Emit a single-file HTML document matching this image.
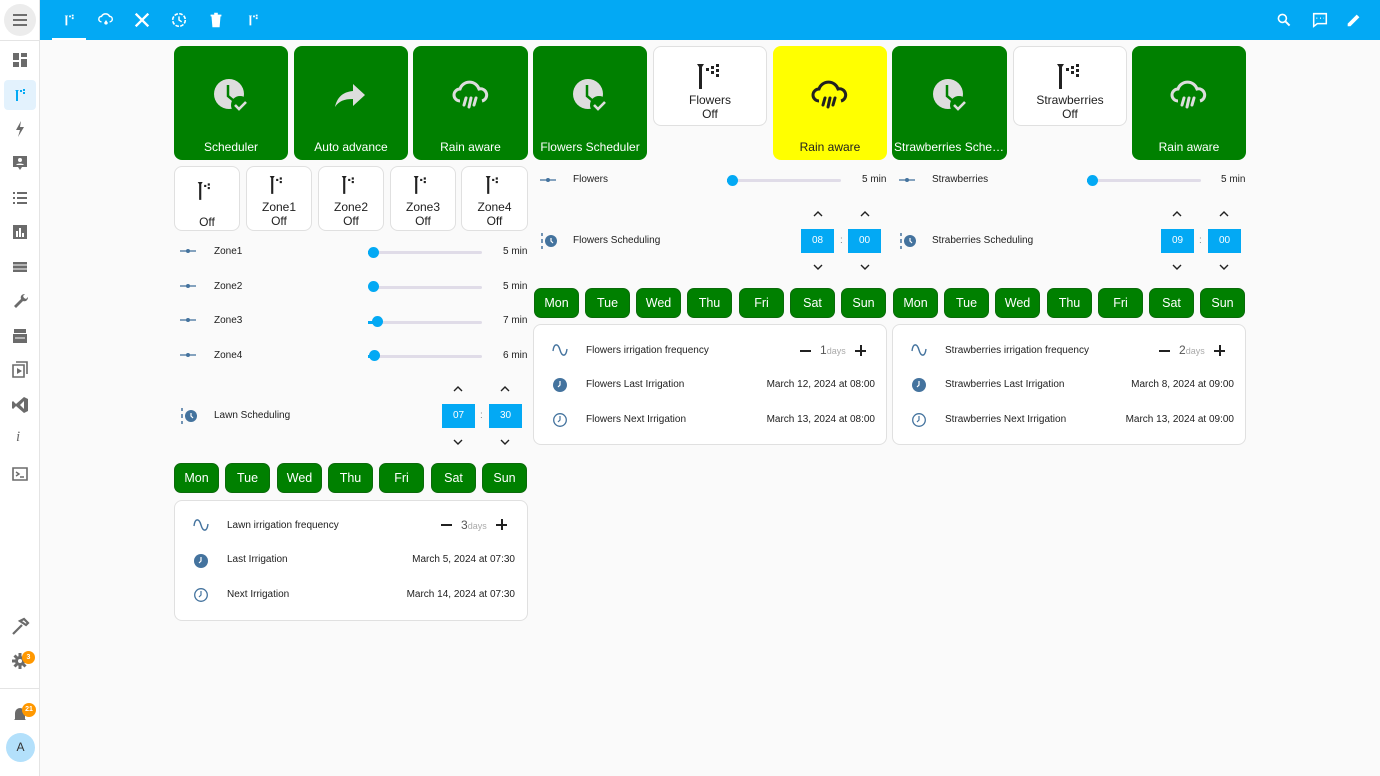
<!DOCTYPE html>
<html><head><meta charset="utf-8"><style>
*{box-sizing:border-box;margin:0;padding:0}
body{width:1380px;height:776px;background:#fafafa;font-family:"Liberation Sans",sans-serif;position:relative;overflow:hidden;color:#212121}
.a{position:absolute}
#side{left:0;top:0;width:40px;height:776px;background:#fff;border-right:1px solid #e4e4e4}
#top{left:40px;top:0;width:1340px;height:40px;background:#03a9f4}
.si{position:absolute;left:10px;width:20px;height:20px}
.tile{position:absolute;border-radius:8px;background:#008000;color:#fff;font-size:12px;text-align:center}
.tile .l{position:absolute;left:0;right:0;bottom:6px;white-space:nowrap;overflow:hidden;text-overflow:ellipsis;padding:0 2px}
.tile svg{position:absolute;left:50%;top:30px;margin-left:-20px;width:40px;height:40px}
.wt{position:absolute;border-radius:8px;background:#fff;border:1px solid #e0e0e0;font-size:12px;text-align:center;line-height:14px;color:#212121}
.wt svg{display:block;margin:0 auto}
.trk{position:absolute;height:3px;background:#e0dce8;border-radius:2px}
.knob{position:absolute;width:11px;height:11px;border-radius:50%;background:#03a9f4}
.kl{position:absolute;height:3px;background:#03a9f4}
.tb{position:absolute;width:33px;height:24px;background:#03a9f4;color:#fff;font-size:10px;text-align:center;line-height:24px}
.day{position:absolute;width:45px;height:30px;background:#008000;border-radius:7px;border:1px solid #0a6a0a;color:#fff;font-size:12.5px;text-align:center;line-height:28px}
.card{position:absolute;background:#fff;border:1px solid #e0e0e0;border-radius:8px}
.ct{position:absolute;font-size:10px;color:#212121;white-space:nowrap}
.badge{position:absolute;background:#ff9800;color:#fff;border-radius:50%;font-size:7px;text-align:center;font-weight:bold}
</style></head><body>
<div id="side" class="a">
 <div class="a" style="left:4px;top:4px;width:32px;height:32px;border-radius:50%;background:#ececec"></div>
 <svg class="a" style="left:12px;top:14px" width="16" height="12"><path d="M1 1h14M1 6h14M1 11h14" stroke="#444" stroke-width="1.6"/></svg>
 <div class="a" style="left:0;top:40px;width:40px;border-top:1px solid #e4e4e4"></div>
 <svg class="si" style="top:50px" viewBox="0 0 20 20"><path d="M3 3h6v7H3zM11 3h6v4h-6zM11 9h6v8h-6zM3 12h6v5H3z" fill="#6b6b6b"/></svg>
 <div class="a" style="left:4px;top:80px;width:32px;height:30px;border-radius:4px;background:#e3f2fd"></div>
 <svg class="si" style="top:85px" viewBox="0 0 20 20"><path d="M5 5h4l-1 1v10H6V6z" fill="#03a9f4"/><path d="M10 5h2v2h-2zM13 4h2v2h-2zM13 7h2v2h-2z" fill="#03a9f4"/></svg>
 <svg class="si" style="top:119px" viewBox="0 0 20 20"><path d="M11 2L6 11h4l-2 7 6-10h-4z" fill="#6b6b6b"/></svg>
 <svg class="si" style="top:153px" viewBox="0 0 20 20"><path d="M3 3h14v11h-5l-2 3-2-3H3z" fill="#6b6b6b"/><circle cx="10" cy="7" r="2" fill="#fff"/><path d="M6 12c1-2 7-2 8 0z" fill="#fff"/></svg>
 <svg class="si" style="top:188px" viewBox="0 0 20 20"><path d="M3 4h2v2H3zM7 4h10v2H7zM3 9h2v2H3zM7 9h10v2H7zM3 14h2v2H3zM7 14h10v2H7z" fill="#6b6b6b"/></svg>
 <svg class="si" style="top:222px" viewBox="0 0 20 20"><path d="M3 3h14v14H3z" fill="#6b6b6b"/><path d="M6 9h2v6H6zM9 6h2v9H9zM12 11h2v4h-2z" fill="#fff"/></svg>
 <svg class="si" style="top:257px" viewBox="0 0 20 20"><path d="M3 5h14v10H3z" fill="#6b6b6b"/><path d="M3 8h14M3 12h14" stroke="#fff"/></svg>
 <svg class="si" style="top:291px" viewBox="0 0 20 20"><path d="M4 15l7-7c-1-3 1-5 4-5l-2 2 1 2 2 1 2-2c0 3-2 5-5 4l-7 7z" fill="#6b6b6b"/></svg>
 <svg class="si" style="top:326px" viewBox="0 0 20 20"><path d="M4 3h12v4H4zM3 8h14v9H3z" fill="#6b6b6b"/><path d="M5 12h10" stroke="#fff"/></svg>
 <svg class="si" style="top:360px" viewBox="0 0 20 20"><path d="M3 5h11v12H3z" fill="none" stroke="#6b6b6b" stroke-width="1.6"/><path d="M6 2h11v12" fill="none" stroke="#6b6b6b" stroke-width="1.6"/><path d="M7 8l5 3-5 3z" fill="#6b6b6b"/></svg>
 <svg class="si" style="top:395px" viewBox="0 0 20 20"><path d="M14 2l4 2v12l-4 2-8-7-3 3-1-1v-6l1-1 3 3zM14 6l-4 4 4 4z" fill="#6b6b6b"/></svg>
 <div class="a" style="left:16px;top:429px;font:italic 15px 'Liberation Serif',serif;color:#6b6b6b">i</div>
 <svg class="si" style="top:464px" viewBox="0 0 20 20"><path d="M3 4h14v12H3z" fill="none" stroke="#6b6b6b" stroke-width="1.6"/><path d="M6 8l3 2-3 2M10 13h4" stroke="#6b6b6b" stroke-width="1.4" fill="none"/></svg>
 <svg class="si" style="top:617px" viewBox="0 0 20 20"><path d="M3 17l9-9M10 4l4-2 4 4-2 2z" stroke="#6b6b6b" stroke-width="2.2" fill="none"/></svg>
 <svg class="si" style="top:651px" viewBox="0 0 20 20"><circle cx="10" cy="10" r="5" fill="#6b6b6b"/><path d="M10 2v16M2 10h16M4.5 4.5l11 11M15.5 4.5l-11 11" stroke="#6b6b6b" stroke-width="3"/><circle cx="10" cy="10" r="2" fill="#fff"/></svg>
 <div class="badge" style="left:22px;top:651px;width:13px;height:13px;line-height:13px">3</div>
 <div class="a" style="left:0;top:688px;width:40px;border-top:1px solid #e4e4e4"></div>
 <svg class="si" style="top:704px" viewBox="0 0 20 20"><path d="M5 15V9a5 5 0 0110 0v6l1 1H4z M8 17h4" fill="#6b6b6b"/></svg>
 <div class="badge" style="left:22px;top:703px;width:14px;height:14px;line-height:14px">21</div>
 <div class="a" style="left:6px;top:733px;width:29px;height:29px;border-radius:50%;background:#b3e0fb;text-align:center;line-height:29px;font-size:12px;color:#333">A</div>
</div>
<div id="top" class="a">
 <svg class="a" style="left:21px;top:11px" width="18" height="18" viewBox="0 0 20 20"><path d="M4 5h4l-1 1v10H5V6z" fill="#fff"/><path d="M9 5h2v2H9zM12 4h2v2h-2zM12 7h2v2h-2z" fill="#fff"/></svg>
 <div class="a" style="left:12px;top:38px;width:34px;height:2px;background:#fff"></div>
 <svg class="a" style="left:57px;top:11px" width="18" height="18" viewBox="0 0 20 20"><path d="M5 12a3 3 0 010-6 5 5 0 019 0 3 3 0 010 6" stroke="#fff" stroke-width="1.6" fill="none"/><path d="M10 10l-2 3a2 2 0 004 0z" fill="#fff"/></svg>
 <svg class="a" style="left:93px;top:11px" width="18" height="18" viewBox="0 0 20 20"><path d="M3 3l14 14M17 3L3 17" stroke="#fff" stroke-width="2.6"/></svg>
 <svg class="a" style="left:130px;top:11px" width="18" height="18" viewBox="0 0 20 20"><circle cx="10" cy="10" r="7" stroke="#fff" stroke-width="1.8" fill="none" stroke-dasharray="4 1.5"/><path d="M10 6v4l3 2" stroke="#fff" stroke-width="1.6" fill="none"/></svg>
 <svg class="a" style="left:167px;top:11px" width="18" height="18" viewBox="0 0 20 20"><path d="M4 4h12v2H4zM8 2h4v2H8zM5 6h10l-1 12H6z" fill="#fff"/></svg>
 <svg class="a" style="left:205px;top:11px" width="18" height="18" viewBox="0 0 20 20"><path d="M4 5h4l-1 1v10H5V6z" fill="#fff"/><path d="M9 5h2v2H9zM12 4h2v2h-2zM12 7h2v2h-2z" fill="#fff"/></svg>
 <svg class="a" style="left:1236px;top:12px" width="16" height="16" viewBox="0 0 20 20"><circle cx="8" cy="8" r="5" stroke="#fff" stroke-width="2" fill="none"/><path d="M12 12l5 5" stroke="#fff" stroke-width="2.4"/></svg>
 <svg class="a" style="left:1271px;top:11px" width="18" height="18" viewBox="0 0 20 20"><path d="M3 3h14v11H7l-4 3z" stroke="#fff" stroke-width="1.7" fill="none"/><path d="M6 8h1M10 8h1M14 8h.5" stroke="#fff" stroke-width="1.6"/></svg>
 <svg class="a" style="left:1305px;top:11px" width="18" height="18" viewBox="0 0 20 20"><path d="M3 17v-3l10-10 3 3-10 10z" fill="#fff"/></svg>
</div>

<div class="tile" style="left:174px;top:46px;width:114px;height:114px"><svg viewBox="0 0 40 40"><circle cx="18" cy="18" r="15" fill="#ddd"/><path d="M17 9v11l6 5" stroke="#008000" stroke-width="2.5" fill="none"/><circle cx="29" cy="29" r="9" fill="#008000"/><path d="M24 29l4 4 7-7" stroke="#ddd" stroke-width="2.6" fill="none"/></svg><div class="l">Scheduler</div></div>
<div class="tile" style="left:294px;top:46px;width:114px;height:114px"><svg viewBox="0 0 40 40"><path d="M22 8l12 11-12 11v-7c-9 0-14 2-18 8 2-9 7-15 18-16z" fill="#ddd"/></svg><div class="l">Auto advance</div></div>
<div class="tile" style="left:413px;top:46px;width:115px;height:114px"><svg viewBox="0 0 40 40"><path d="M9 25a6 6 0 010-12 10 10 0 0119 0 6 6 0 013 12" stroke="#ddd" stroke-width="3" fill="none"/><path d="M15 22l-2 7M20 22l-2 9M25 22l-2 7" stroke="#ddd" stroke-width="3" stroke-linecap="round"/></svg><div class="l">Rain aware</div></div>
<div class="tile" style="left:533px;top:46px;width:114px;height:114px"><svg viewBox="0 0 40 40"><circle cx="18" cy="18" r="15" fill="#ddd"/><path d="M17 9v11l6 5" stroke="#008000" stroke-width="2.5" fill="none"/><circle cx="29" cy="29" r="9" fill="#008000"/><path d="M24 29l4 4 7-7" stroke="#ddd" stroke-width="2.6" fill="none"/></svg><div class="l">Flowers Scheduler</div></div>
<div class="wt" style="left:653px;top:46px;width:114px;height:80px;padding-top:16px"><svg width="28" height="30" viewBox="0 0 28 30"><path d="M1 1h7l-2 3v22H3V4z" fill="#212121"/><path d="M10 5h3v3h-3zM15 3h3v3h-3zM15 8h3v3h-3zM20 1h3v3h-3zM20 6h3v3h-3zM20 11h3v3h-3z" fill="#212121"/></svg>Flowers<br>Off</div>
<div class="tile" style="left:773px;top:46px;width:114px;height:114px;background:#ffff00;color:#212121"><svg viewBox="0 0 40 40"><path d="M9 25a6 6 0 010-12 10 10 0 0119 0 6 6 0 013 12" stroke="#212121" stroke-width="3" fill="none"/><path d="M15 22l-2 7M20 22l-2 9M25 22l-2 7" stroke="#212121" stroke-width="3" stroke-linecap="round"/></svg><div class="l">Rain aware</div></div>
<div class="tile" style="left:892px;top:46px;width:115px;height:114px"><svg viewBox="0 0 40 40"><circle cx="18" cy="18" r="15" fill="#ddd"/><path d="M17 9v11l6 5" stroke="#008000" stroke-width="2.5" fill="none"/><circle cx="29" cy="29" r="9" fill="#008000"/><path d="M24 29l4 4 7-7" stroke="#ddd" stroke-width="2.6" fill="none"/></svg><div class="l">Strawberries Sched…</div></div>
<div class="wt" style="left:1013px;top:46px;width:114px;height:80px;padding-top:16px"><svg width="28" height="30" viewBox="0 0 28 30"><path d="M1 1h7l-2 3v22H3V4z" fill="#212121"/><path d="M10 5h3v3h-3zM15 3h3v3h-3zM15 8h3v3h-3zM20 1h3v3h-3zM20 6h3v3h-3zM20 11h3v3h-3z" fill="#212121"/></svg>Strawberries<br>Off</div>
<div class="tile" style="left:1132px;top:46px;width:114px;height:114px"><svg viewBox="0 0 40 40"><path d="M9 25a6 6 0 010-12 10 10 0 0119 0 6 6 0 013 12" stroke="#ddd" stroke-width="3" fill="none"/><path d="M15 22l-2 7M20 22l-2 9M25 22l-2 7" stroke="#ddd" stroke-width="3" stroke-linecap="round"/></svg><div class="l">Rain aware</div></div>

<div class="wt" style="left:174px;top:166px;width:66px;height:65px;padding-top:14px"><svg width="20" height="22" viewBox="0 0 28 30"><path d="M1 1h7l-2 3v22H3V4z" fill="#212121"/><path d="M10 5h3v3h-3zM15 3h3v3h-3zM15 8h3v3h-3z" fill="#212121"/></svg><div style="margin-top:12px">Off</div></div>
<div class="wt" style="left:246px;top:166px;width:66px;height:65px;padding-top:8px"><svg width="20" height="22" viewBox="0 0 28 30"><path d="M1 1h7l-2 3v22H3V4z" fill="#212121"/><path d="M10 5h3v3h-3zM15 3h3v3h-3zM15 8h3v3h-3z" fill="#212121"/></svg><div style="margin-top:3px">Zone1<br>Off</div></div>
<div class="wt" style="left:318px;top:166px;width:66px;height:65px;padding-top:8px"><svg width="20" height="22" viewBox="0 0 28 30"><path d="M1 1h7l-2 3v22H3V4z" fill="#212121"/><path d="M10 5h3v3h-3zM15 3h3v3h-3zM15 8h3v3h-3z" fill="#212121"/></svg><div style="margin-top:3px">Zone2<br>Off</div></div>
<div class="wt" style="left:390px;top:166px;width:66px;height:65px;padding-top:8px"><svg width="20" height="22" viewBox="0 0 28 30"><path d="M1 1h7l-2 3v22H3V4z" fill="#212121"/><path d="M10 5h3v3h-3zM15 3h3v3h-3zM15 8h3v3h-3z" fill="#212121"/></svg><div style="margin-top:3px">Zone3<br>Off</div></div>
<div class="wt" style="left:461px;top:166px;width:67px;height:65px;padding-top:8px"><svg width="20" height="22" viewBox="0 0 28 30"><path d="M1 1h7l-2 3v22H3V4z" fill="#212121"/><path d="M10 5h3v3h-3zM15 3h3v3h-3zM15 8h3v3h-3z" fill="#212121"/></svg><div style="margin-top:3px">Zone4<br>Off</div></div>

<svg class="a" style="left:180px;top:247px" width="16" height="8"><path d="M0 4h16" stroke="#44739e" stroke-width="1.3"/><circle cx="8" cy="4" r="2" fill="#44739e"/></svg>
<div class="ct" style="left:214px;top:246px">Zone1</div><div class="trk" style="left:368px;top:251px;width:114px"></div><div class="kl" style="left:368px;top:251px;width:6px"></div><div class="knob" style="left:368px;top:247px"></div><div class="ct" style="left:503px;top:246px">5 min</div>
<svg class="a" style="left:180px;top:282px" width="16" height="8"><path d="M0 4h16" stroke="#44739e" stroke-width="1.3"/><circle cx="8" cy="4" r="2" fill="#44739e"/></svg>
<div class="ct" style="left:214px;top:281px">Zone2</div><div class="trk" style="left:368px;top:286px;width:114px"></div><div class="knob" style="left:368px;top:281px"></div><div class="ct" style="left:503px;top:281px">5 min</div>
<svg class="a" style="left:180px;top:316px" width="16" height="8"><path d="M0 4h16" stroke="#44739e" stroke-width="1.3"/><circle cx="8" cy="4" r="2" fill="#44739e"/></svg>
<div class="ct" style="left:214px;top:315px">Zone3</div><div class="trk" style="left:368px;top:321px;width:114px"></div><div class="kl" style="left:368px;top:321px;width:8px"></div><div class="knob" style="left:372px;top:316px"></div><div class="ct" style="left:503px;top:315px">7 min</div>
<svg class="a" style="left:180px;top:351px" width="16" height="8"><path d="M0 4h16" stroke="#44739e" stroke-width="1.3"/><circle cx="8" cy="4" r="2" fill="#44739e"/></svg>
<div class="ct" style="left:214px;top:350px">Zone4</div><div class="trk" style="left:368px;top:355px;width:114px"></div><div class="kl" style="left:368px;top:355px;width:6px"></div><div class="knob" style="left:369px;top:350px"></div><div class="ct" style="left:503px;top:350px">6 min</div>

<svg class="a" style="left:180px;top:408px" width="18" height="16"><path d="M2 0v3M2 6v4M2 13v3" stroke="#44739e" stroke-width="1.5"/><circle cx="11" cy="8" r="6" fill="#44739e"/><path d="M11 5v3l2 2" stroke="#fff" stroke-width="1.2" fill="none"/></svg>
<div class="ct" style="left:214px;top:410px">Lawn Scheduling</div>
<svg class="a" style="left:453px;top:385px" width="10" height="7"><path d="M1 6l4-4 4 4" stroke="#212121" stroke-width="1.4" fill="none"/></svg>
<svg class="a" style="left:500px;top:385px" width="10" height="7"><path d="M1 6l4-4 4 4" stroke="#212121" stroke-width="1.4" fill="none"/></svg>
<div class="tb" style="left:442px;top:404px">07</div><div class="ct" style="left:480px;top:410px;color:#888">:</div><div class="tb" style="left:489px;top:404px">30</div>
<svg class="a" style="left:453px;top:439px" width="10" height="7"><path d="M1 1l4 4 4-4" stroke="#212121" stroke-width="1.4" fill="none"/></svg>
<svg class="a" style="left:500px;top:439px" width="10" height="7"><path d="M1 1l4 4 4-4" stroke="#212121" stroke-width="1.4" fill="none"/></svg>
<div class="day" style="left:174px;top:463px">Mon</div><div class="day" style="left:225px;top:463px">Tue</div><div class="day" style="left:277px;top:463px">Wed</div><div class="day" style="left:328px;top:463px">Thu</div><div class="day" style="left:379px;top:463px">Fri</div><div class="day" style="left:431px;top:463px">Sat</div><div class="day" style="left:482px;top:463px">Sun</div>
<div class="card" style="left:174px;top:500px;width:354px;height:121px">
 <svg class="a" style="left:18px;top:17px" width="16" height="14"><path d="M1 8C2 0 6 0 8 7s6 7 7-1" stroke="#44739e" stroke-width="1.4" fill="none"/></svg>
 <div class="ct" style="left:52px;top:19px">Lawn irrigation frequency</div>
 <div class="a" style="left:266px;top:23px;width:11px;height:2px;background:#212121"></div>
 <div class="ct" style="left:286px;top:17px;font-size:12px;color:#555">3<span style="font-size:9px;color:#aaa">days</span></div>
 <div class="a" style="left:321px;top:23px;width:11px;height:2px;background:#212121"></div><div class="a" style="left:325.5px;top:18px;width:2px;height:11px;background:#212121"></div>
 <svg class="a" style="left:18px;top:52px" width="16" height="16"><circle cx="8" cy="8" r="7" fill="#44739e"/><path d="M8 4v4l-2 2" stroke="#fff" stroke-width="1.2" fill="none"/></svg>
 <div class="ct" style="left:52px;top:53px">Last Irrigation</div><div class="ct" style="right:12px;top:53px">March 5, 2024 at 07:30</div>
 <svg class="a" style="left:18px;top:86px" width="16" height="16"><circle cx="8" cy="8" r="6.3" stroke="#44739e" stroke-width="1.3" fill="none"/><path d="M8 4v4l-2 2" stroke="#44739e" stroke-width="1.2" fill="none"/></svg>
 <div class="ct" style="left:52px;top:88px">Next Irrigation</div><div class="ct" style="right:12px;top:88px">March 14, 2024 at 07:30</div>
</div>

<svg class="a" style="left:540px;top:176px" width="16" height="8"><path d="M0 4h16" stroke="#44739e" stroke-width="1.3"/><circle cx="8" cy="4" r="2" fill="#44739e"/></svg>
<div class="ct" style="left:573px;top:174px">Flowers</div><div class="trk" style="left:727px;top:179px;width:114px"></div><div class="kl" style="left:727px;top:179px;width:6px"></div><div class="knob" style="left:727px;top:175px"></div><div class="ct" style="left:862px;top:174px">5 min</div>
<svg class="a" style="left:540px;top:233px" width="18" height="16"><path d="M2 0v3M2 6v4M2 13v3" stroke="#44739e" stroke-width="1.5"/><circle cx="11" cy="8" r="6" fill="#44739e"/><path d="M11 5v3l2 2" stroke="#fff" stroke-width="1.2" fill="none"/></svg>
<div class="ct" style="left:573px;top:235px">Flowers Scheduling</div>
<svg class="a" style="left:813px;top:210px" width="10" height="7"><path d="M1 6l4-4 4 4" stroke="#212121" stroke-width="1.4" fill="none"/></svg>
<svg class="a" style="left:860px;top:210px" width="10" height="7"><path d="M1 6l4-4 4 4" stroke="#212121" stroke-width="1.4" fill="none"/></svg>
<div class="tb" style="left:801px;top:229px">08</div><div class="ct" style="left:840px;top:235px;color:#888">:</div><div class="tb" style="left:848px;top:229px">00</div>
<svg class="a" style="left:813px;top:264px" width="10" height="7"><path d="M1 1l4 4 4-4" stroke="#212121" stroke-width="1.4" fill="none"/></svg>
<svg class="a" style="left:860px;top:264px" width="10" height="7"><path d="M1 1l4 4 4-4" stroke="#212121" stroke-width="1.4" fill="none"/></svg>
<div class="day" style="left:534px;top:288px">Mon</div><div class="day" style="left:585px;top:288px">Tue</div><div class="day" style="left:636px;top:288px">Wed</div><div class="day" style="left:687px;top:288px">Thu</div><div class="day" style="left:739px;top:288px">Fri</div><div class="day" style="left:790px;top:288px">Sat</div><div class="day" style="left:841px;top:288px">Sun</div>
<div class="card" style="left:533px;top:324px;width:354px;height:121px">
 <svg class="a" style="left:18px;top:18px" width="16" height="14"><path d="M1 8C2 0 6 0 8 7s6 7 7-1" stroke="#44739e" stroke-width="1.4" fill="none"/></svg>
 <div class="ct" style="left:52px;top:20px">Flowers irrigation frequency</div>
 <div class="a" style="left:266px;top:25px;width:11px;height:2px;background:#212121"></div>
 <div class="ct" style="left:286px;top:18px;font-size:12px;color:#555">1<span style="font-size:9px;color:#aaa">days</span></div>
 <div class="a" style="left:321px;top:25px;width:11px;height:2px;background:#212121"></div><div class="a" style="left:325.5px;top:20px;width:2px;height:11px;background:#212121"></div>
 <svg class="a" style="left:18px;top:52px" width="16" height="16"><circle cx="8" cy="8" r="7" fill="#44739e"/><path d="M8 4v4l-2 2" stroke="#fff" stroke-width="1.2" fill="none"/></svg>
 <div class="ct" style="left:52px;top:54px">Flowers Last Irrigation</div><div class="ct" style="right:11px;top:54px">March 12, 2024 at 08:00</div>
 <svg class="a" style="left:18px;top:87px" width="16" height="16"><circle cx="8" cy="8" r="6.3" stroke="#44739e" stroke-width="1.3" fill="none"/><path d="M8 4v4l-2 2" stroke="#44739e" stroke-width="1.2" fill="none"/></svg>
 <div class="ct" style="left:52px;top:89px">Flowers Next Irrigation</div><div class="ct" style="right:11px;top:89px">March 13, 2024 at 08:00</div>
</div>

<svg class="a" style="left:899px;top:176px" width="16" height="8"><path d="M0 4h16" stroke="#44739e" stroke-width="1.3"/><circle cx="8" cy="4" r="2" fill="#44739e"/></svg>
<div class="ct" style="left:932px;top:174px">Strawberries</div><div class="trk" style="left:1087px;top:179px;width:114px"></div><div class="kl" style="left:1087px;top:179px;width:6px"></div><div class="knob" style="left:1087px;top:175px"></div><div class="ct" style="left:1221px;top:174px">5 min</div>
<svg class="a" style="left:899px;top:233px" width="18" height="16"><path d="M2 0v3M2 6v4M2 13v3" stroke="#44739e" stroke-width="1.5"/><circle cx="11" cy="8" r="6" fill="#44739e"/><path d="M11 5v3l2 2" stroke="#fff" stroke-width="1.2" fill="none"/></svg>
<div class="ct" style="left:932px;top:235px">Straberries Scheduling</div>
<svg class="a" style="left:1172px;top:210px" width="10" height="7"><path d="M1 6l4-4 4 4" stroke="#212121" stroke-width="1.4" fill="none"/></svg>
<svg class="a" style="left:1219px;top:210px" width="10" height="7"><path d="M1 6l4-4 4 4" stroke="#212121" stroke-width="1.4" fill="none"/></svg>
<div class="tb" style="left:1161px;top:229px">09</div><div class="ct" style="left:1199px;top:235px;color:#888">:</div><div class="tb" style="left:1208px;top:229px">00</div>
<svg class="a" style="left:1172px;top:264px" width="10" height="7"><path d="M1 1l4 4 4-4" stroke="#212121" stroke-width="1.4" fill="none"/></svg>
<svg class="a" style="left:1219px;top:264px" width="10" height="7"><path d="M1 1l4 4 4-4" stroke="#212121" stroke-width="1.4" fill="none"/></svg>
<div class="day" style="left:893px;top:288px">Mon</div><div class="day" style="left:944px;top:288px">Tue</div><div class="day" style="left:995px;top:288px">Wed</div><div class="day" style="left:1047px;top:288px">Thu</div><div class="day" style="left:1098px;top:288px">Fri</div><div class="day" style="left:1149px;top:288px">Sat</div><div class="day" style="left:1200px;top:288px">Sun</div>
<div class="card" style="left:892px;top:324px;width:354px;height:121px">
 <svg class="a" style="left:18px;top:18px" width="16" height="14"><path d="M1 8C2 0 6 0 8 7s6 7 7-1" stroke="#44739e" stroke-width="1.4" fill="none"/></svg>
 <div class="ct" style="left:52px;top:20px">Strawberries irrigation frequency</div>
 <div class="a" style="left:266px;top:25px;width:11px;height:2px;background:#212121"></div>
 <div class="ct" style="left:286px;top:18px;font-size:12px;color:#555">2<span style="font-size:9px;color:#aaa">days</span></div>
 <div class="a" style="left:321px;top:25px;width:11px;height:2px;background:#212121"></div><div class="a" style="left:325.5px;top:20px;width:2px;height:11px;background:#212121"></div>
 <svg class="a" style="left:18px;top:52px" width="16" height="16"><circle cx="8" cy="8" r="7" fill="#44739e"/><path d="M8 4v4l-2 2" stroke="#fff" stroke-width="1.2" fill="none"/></svg>
 <div class="ct" style="left:52px;top:54px">Strawberries Last Irrigation</div><div class="ct" style="right:11px;top:54px">March 8, 2024 at 09:00</div>
 <svg class="a" style="left:18px;top:87px" width="16" height="16"><circle cx="8" cy="8" r="6.3" stroke="#44739e" stroke-width="1.3" fill="none"/><path d="M8 4v4l-2 2" stroke="#44739e" stroke-width="1.2" fill="none"/></svg>
 <div class="ct" style="left:52px;top:89px">Strawberries Next Irrigation</div><div class="ct" style="right:11px;top:89px">March 13, 2024 at 09:00</div>
</div>
</body></html>
